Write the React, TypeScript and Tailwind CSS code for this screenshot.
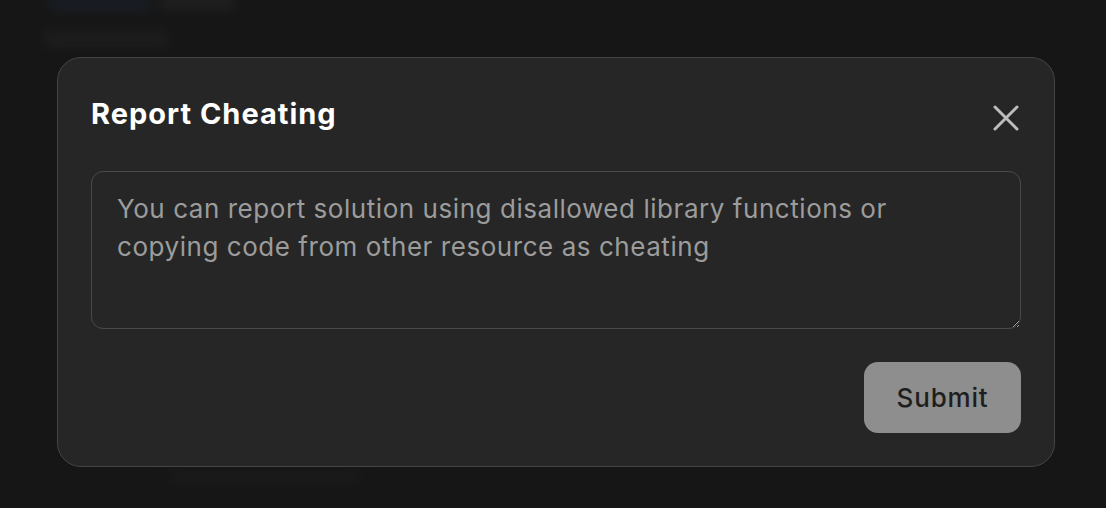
import React from "react";

export default function App() {
  return (
    <div
      className="relative w-[1106px] h-[508px] overflow-hidden bg-[#161616]"
      style={{ fontFamily: "Inter, 'Noto Sans', sans-serif" }}
    >
      {/* blurred backdrop content */}
      <div className="absolute inset-0 blur-[6px] opacity-60">
        <div className="absolute left-[50px] top-[-6px] w-[100px] h-[16px] rounded bg-[#1c2430]" />
        <div className="absolute left-[160px] top-[-6px] w-[75px] h-[16px] rounded bg-[#262626]" />
        <div className="absolute left-[44px] top-[30px] w-[124px] h-[18px] rounded bg-[#222222]" />
        <div className="absolute left-[170px] top-[470px] w-[190px] h-[14px] rounded bg-[#1d1d1d]" />
      </div>
      <div className="relative ml-[57px] mt-[57px] w-[998px] h-[410px] rounded-[24px] border border-[#454545] bg-[#262626] p-[33px] flex flex-col">
        <div className="flex items-start justify-between">
          <h2 className="mt-[3px] text-[29px] leading-[40px] font-bold text-white tracking-[1px]">
            Report Cheating
          </h2>
          <button className="mt-[13px] mr-[1px] w-[28px] h-[28px] flex items-center justify-center">
            <svg width="28" height="28" viewBox="0 0 28 28" fill="none">
              <path
                d="M3 3 L25 25 M25 3 L3 25"
                stroke="#bdbdbd"
                strokeWidth="3"
                strokeLinecap="round"
              />
            </svg>
          </button>
        </div>
        <textarea
          className="mt-[37px] w-[930px] h-[158px] rounded-[12px] border border-[#4a4a4a] bg-transparent pl-[25px] pr-[25px] pt-[18px] text-[26px] leading-[38px] tracking-[0.55px] text-[#d0d0d0] placeholder:text-[#9c9c9c] outline-none resize-y"
          placeholder="You can report solution using disallowed library functions or copying code from other resource as cheating"
        />
        <div className="mt-[33px] flex justify-end">
          <button className="w-[157px] h-[71px] rounded-[14px] bg-[#8e8e8e] text-[26px] font-medium tracking-[0.8px] text-[#1e1e1e]">
            Submit
          </button>
        </div>
      </div>
    </div>
  );
}
